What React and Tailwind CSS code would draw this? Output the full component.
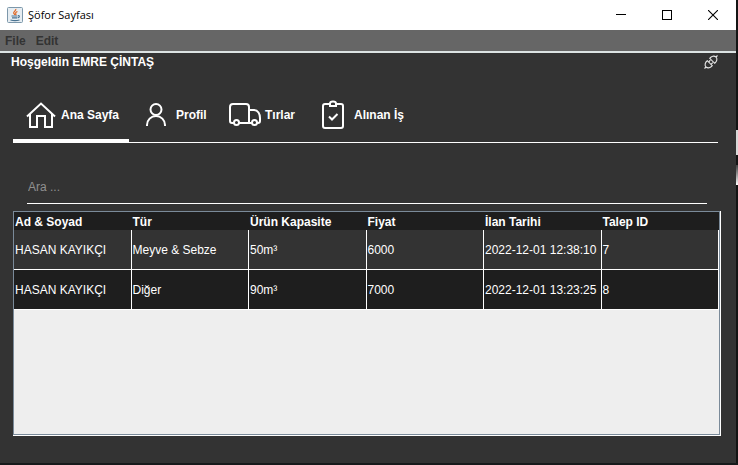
import { useState } from 'react'

const columns = ['Ad & Soyad', 'Tür', 'Ürün Kapasite', 'Fiyat', 'İlan Tarihi', 'Talep ID']

const rows = [
  ['HASAN KAYIKÇI', 'Meyve & Sebze', '50m³', '6000', '2022-12-01 12:38:10', '7'],
  ['HASAN KAYIKÇI', 'Diğer', '90m³', '7000', '2022-12-01 13:23:25', '8'],
]

function JavaIcon() {
  return (
    <svg width="16" height="16" viewBox="0 0 16 16" fill="none">
      <rect x="0.5" y="0.5" width="15" height="15" rx="1" fill="#e6edf2" stroke="#7d98ab" />
      <path d="M8.8 2c.6 1.600-2.400 2.500-2.100 4 .2.700.9 1.100 1.100 1.900M10.400 4.500c-1.200.5-2.200 1.200-1.600 2.100.4.500.2 1-.3 1.400" stroke="#e2641e" strokeWidth="1.200" />
      <path d="M4.500 9h6M5 10.800h5M11 8.700c1.800-.3 1.900 1.600-.4 2.200M3.500 13c2.500.8 6.500.8 9 0" stroke="#4a7391" strokeWidth="1.200" />
    </svg>
  )
}

function HomeIcon() {
  return (
    <svg width="30" height="28" viewBox="0 0 30 28" fill="none" stroke="white" strokeWidth="2">
      <path d="M1 15.500 15 2.500l14 13" />
      <path d="M4 13v13h7V15h8v11h7V13" />
    </svg>
  )
}

function UserIcon() {
  return (
    <svg width="22" height="26" viewBox="0 0 22 26" fill="none" stroke="white" strokeWidth="2">
      <circle cx="11" cy="7.500" r="5.500" />
      <path d="M2 24v-1a9 9 0 0 1 18 0v1" />
    </svg>
  )
}

function TruckIcon() {
  return (
    <svg width="32" height="24" viewBox="0 0 32 24" fill="none" stroke="white" strokeWidth="2">
      <path d="M5 20H3a2 2 0 0 1-2-2V4a3 3 0 0 1 3-3h13a3 3 0 0 1 3 3v16H10" />
      <path d="M20 7h5c4 0 6 4 6 8v3a2 2 0 0 1-2 2h-1M23 20h-3" />
      <circle cx="7.500" cy="19.500" r="2.500" />
      <circle cx="25.500" cy="19.500" r="2.500" />
    </svg>
  )
}

function TaskIcon() {
  return (
    <svg width="24" height="30" viewBox="0 0 24 30" fill="none" stroke="white" strokeWidth="2">
      <path d="M9 4H4a2 2 0 0 0-2 2v20a2 2 0 0 0 2 2h16a2 2 0 0 0 2-2V6a2 2 0 0 0-2-2h-5" />
      <path d="M9 6V3.500a3 2 0 0 1 6 0V6z" />
      <path d="m8 16.500 3 3 5.500-5.500" />
    </svg>
  )
}

function PlugIcon() {
  return (
    <svg width="14" height="14" viewBox="0 0 14 14" fill="none" stroke="#e8e8e8" strokeWidth="1.100">
      <path d="M0.500 13.500 2 12M13.500 0.500 12 2" />
      <path d="M2 12c-1.700-2-.9-4.500 1.300-6.300l5 5C6.500 12.900 4 13.700 2 12z" />
      <path d="M12 2c1.700 2 .9 4.500-1.300 6.300l-5-5C7.500 1.100 10 .3 12 2z" />
      <path d="m4.600 7 1.800-1.800M7 9.400l1.800-1.800" />
    </svg>
  )
}

const tabs = [
  { label: 'Ana Sayfa', icon: HomeIcon, className: 'w-[116px] gap-[5px] pl-[13px]' },
  { label: 'Profil', icon: UserIcon, className: 'w-[94px] gap-[9px] pl-4' },
  { label: 'Tırlar', icon: TruckIcon, className: 'w-[92px] gap-1 pl-1.5' },
  { label: 'Alınan İş', icon: TaskIcon, className: 'w-[100px] gap-[9px] pl-1.5' },
]

function TitleBar() {
  return (
    <header className="flex h-[30px] items-center bg-white pl-[7px] text-black">
      <JavaIcon />
      <h1 className="ml-[5px] flex-1 font-['Open_Sans',sans-serif] text-[11px] leading-4">Şöfor Sayfası</h1>
      <button type="button" aria-label="Minimize" className="flex h-7 w-[46px] items-center justify-center">
        <svg width="10" height="10" stroke="black" shapeRendering="crispEdges">
          <path d="M0 4.500h10" />
        </svg>
      </button>
      <button type="button" aria-label="Maximize" className="flex h-7 w-[46px] items-center justify-center">
        <svg width="10" height="10" fill="none" stroke="black" shapeRendering="crispEdges">
          <rect x="0.500" y="0.500" width="9" height="9" />
        </svg>
      </button>
      <button type="button" aria-label="Close" className="flex h-7 w-[46px] items-center justify-center">
        <svg width="10" height="10" stroke="black" strokeWidth="1.100">
          <path d="m0 0 10 10M10 0 0 10" />
        </svg>
      </button>
    </header>
  )
}

function JobTable() {
  return (
    <div className="flex flex-1 flex-col border-r border-b border-white">
      <div className="flex-1 border border-[#7a8a99] bg-[#eeeeee]">
        <table className="w-full table-fixed border-separate border-spacing-0 text-left text-[12px] leading-4">
          <thead>
            <tr className="h-[18px] bg-[#1e1e1e]">
              {columns.map((name) => (
                <th key={name} scope="col" className="p-0 pt-0.5 pl-px font-bold whitespace-nowrap">
                  {name}
                </th>
              ))}
            </tr>
          </thead>
          <tbody>
            {rows.map((row) => (
              <tr key={row[5]} className="h-10 odd:bg-[#333333] even:bg-[#1e1e1e]">
                {row.map((value, i) => (
                  <td key={columns[i]} className="border-r border-b border-white p-0 pl-px whitespace-nowrap">
                    {value}
                  </td>
                ))}
              </tr>
            ))}
          </tbody>
        </table>
      </div>
    </div>
  )
}

export default function App() {
  const [active, setActive] = useState('Ana Sayfa')

  return (
    <div className="flex min-h-screen border-b-2 border-[#171a1b] bg-[#333333] font-['Liberation_Sans',Arial,sans-serif] text-[12px] leading-4 text-white">
      <div className="flex min-w-0 flex-1 flex-col">
        <TitleBar />
        <nav className="flex h-[23px] gap-2.5 border-b-2 border-[#dce3e3] bg-[#666666] pl-[5px] font-bold text-[#333333]">
          <button type="button">File</button>
          <button type="button">Edit</button>
        </nav>

        <div className="flex h-[18px] items-center justify-between pr-[18px] pl-[11px]">
          <p className="font-bold">Hoşgeldin EMRE ÇİNTAŞ</p>
          <button type="button" aria-label="Çıkış">
            <PlugIcon />
          </button>
        </div>

        <main className="flex flex-1 flex-col pt-5 pr-[15px] pb-[27px] pl-[13px]">
          <div className="mr-[3px] flex border-b border-white">
            {tabs.map(({ label, icon: Icon, className }) => (
              <button
                key={label}
                type="button"
                onClick={() => setActive(label)}
                className={`flex h-[51px] items-center border-b-3 font-bold whitespace-nowrap ${
                  active === label ? 'border-white' : 'border-transparent'
                } ${className}`}
              >
                <Icon />
                {label}
              </button>
            ))}
          </div>

          <input
            type="text"
            aria-label="Ara"
            placeholder="Ara ..."
            className="mt-7 mr-3.5 mb-[7px] ml-3.5 h-[33px] border-b border-white bg-transparent px-px outline-none placeholder:text-[#909090]"
          />

          <JobTable />
        </main>
      </div>

      {/* desktop showing past the window edge */}
      <div className="flex w-0.5 flex-col bg-[#141414]">
        <div className="mt-[130px] h-[25px] bg-[#d8d8d8]" />
        <div className="mt-2.5 h-5 bg-linear-to-b from-[#444444] to-white" />
      </div>
    </div>
  )
}
